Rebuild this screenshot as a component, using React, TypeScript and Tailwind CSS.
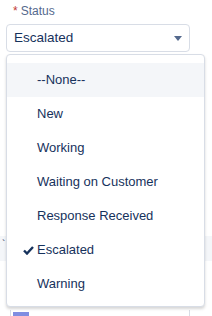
import React from "react";

const options = [
  "--None--",
  "New",
  "Working",
  "Waiting on Customer",
  "Response Received",
  "Escalated",
  "Warning",
];

export default function App() {
  return (
    <div
      className="relative w-[212px] h-[316px] overflow-hidden bg-white"
      style={{ fontFamily: '"Liberation Sans", Arial, sans-serif' }}
    >
      {/* label */}
      <div className="flex items-center h-[24px] pl-[13px] pb-[2px] text-[12px] leading-none">
        <span className="text-[#c23934] mr-[3px]">*</span>
        <span className="text-[#54698d]">Status</span>
      </div>
      {/* select */}
      <div className="ml-[6px] w-[184px] h-[28px] border border-[#d8dde6] rounded-[4px] flex items-center justify-between pl-[7px] pr-[7px]">
        <span className="text-[13.5px] text-[#16325c]">Escalated</span>
        <svg width="8" height="5" viewBox="0 0 8 5">
          <path d="M0 0 L8 0 L4 5 Z" fill="#54698d" />
        </svg>
      </div>

      {/* background content behind the menu */}
      <div className="mt-[184px] h-[25px] bg-[#f4f6f9] flex items-center pl-[2px]">
        <span className="text-[10px] text-[#16325c] leading-none -mt-[8px]">`</span>
      </div>
      <div className="mt-[49px] flex">
        <div className="ml-[10px] w-[180px] h-[10px] border-l border-r border-[#d8dde6] relative">
          <div className="absolute left-[2px] top-[2px] w-[16px] h-[6px] bg-[#7f8de1]" />
        </div>
      </div>

      {/* dropdown menu */}
      <div className="absolute left-[6px] top-[54px] w-[199px] bg-white border border-[#d8dde6] rounded-[4px] shadow-[0_2px_3px_0_rgba(0,0,0,0.16)] pt-[8px] pb-[5px]">
        {options.map((o) => (
          <div
            key={o}
            className={`h-[34px] flex items-center text-[13px] text-[#16325c] ${
              o === "--None--" ? "bg-[#f4f6f9]" : ""
            }`}
          >
            <div className="w-[30px] flex justify-end pr-[3px]">
              {o === "Escalated" && (
                <svg width="11" height="9" viewBox="0 0 11 9">
                  <path
                    d="M1 4.5 L4 7.5 L10 1"
                    fill="none"
                    stroke="#16325c"
                    strokeWidth="2.4"
                  />
                </svg>
              )}
            </div>
            <span>{o}</span>
          </div>
        ))}
      </div>
    </div>
  );
}
